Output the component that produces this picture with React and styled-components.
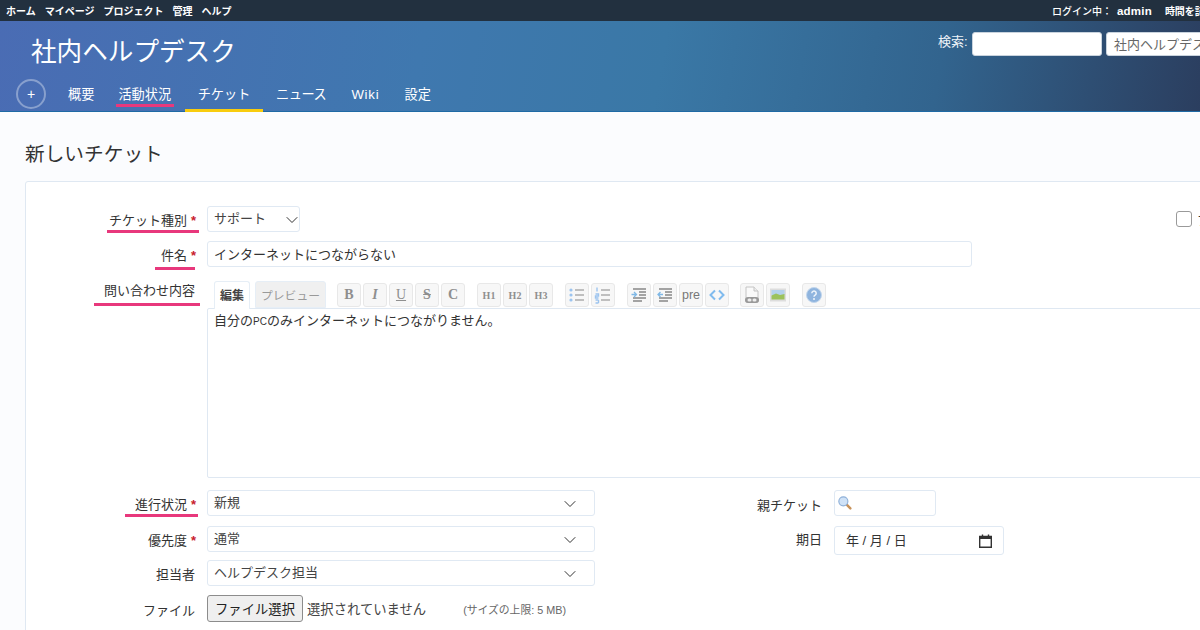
import React from 'react';
import styled, { createGlobalStyle } from 'styled-components';
import { ChevronDown } from 'lucide-react';

const GlobalStyle = createGlobalStyle`
  html, body {
    margin: 0;
    padding: 0;
    height: 100%;
    overflow: hidden;
    background: #fbfcfe;
  }
  body, input, select, button {
    font-family: "Liberation Sans", "Noto Sans CJK JP", sans-serif;
    color: #333;
  }
  * {
    box-sizing: border-box;
  }
`;

const PINK = '#e8387c';

const Page = styled.div`
  width: 1200px;
  height: 630px;
  overflow: hidden;
`;

const TopMenu = styled.div`
  display: flex;
  align-items: center;
  justify-content: space-between;
  height: 21px;
  padding-left: 6px;
  background: #22303f;
  color: #fff;
  font-size: 10px;
  font-weight: 700;
  white-space: nowrap;
`;

const TopLinks = styled.div`
  display: flex;
  gap: 9px;
`;

const Account = styled.div`
  display: flex;
  gap: 13px;
  width: 148px;
  overflow: hidden;
  flex: none;
`;

const AccountName = styled.span`
  margin-left: 5px;
  font-size: 11.5px;
  letter-spacing: 0.2px;
`;

const LoginLabel = styled.span`
  font-weight: 500;
`;

const Header = styled.header`
  display: flex;
  flex-direction: column;
  height: 91px;
  background: linear-gradient(100deg, #4a6cb4 0%, #3f78af 35%, #3a78a6 55%, #32648e 78%, #2b3e5f 100%);
  border-bottom: 1px solid #1f6aa5;
  color: #fff;
`;

const TitleRow = styled.div`
  display: flex;
  justify-content: space-between;
  height: 57px;
`;

const SiteTitle = styled.h1`
  margin: 14px 0 0 31px;
  font-size: 25.6px;
  line-height: 34px;
  font-weight: 400;
  white-space: nowrap;
`;

const QuickSearch = styled.div`
  display: flex;
  align-items: flex-start;
  flex: none;
  width: 262px;
  padding-top: 11px;
  overflow: hidden;
  font-size: 13px;
  color: #eef3f8;
`;

const SearchLabel = styled.span`
  flex: none;
  width: 34px;
  line-height: 20px;
  white-space: nowrap;
`;

const HeaderInput = styled.input`
  flex: none;
  width: 130px;
  height: 24px;
  border: 1px solid #c9d3dd;
  border-radius: 3px;
  background: #fff;
`;

const ProjectJump = styled.div`
  flex: none;
  width: 130px;
  height: 24px;
  margin-left: 4px;
  padding: 0 7px;
  border: 1px solid #c9d3dd;
  border-radius: 3px;
  background: #fff;
  color: #666;
  line-height: 24px;
  white-space: nowrap;
`;

const Tabs = styled.nav`
  display: flex;
  align-items: flex-start;
  height: 33px;
  padding-left: 16px;
`;

const PlusButton = styled.div`
  flex: none;
  display: flex;
  align-items: center;
  justify-content: center;
  width: 30px;
  height: 30px;
  margin: 1px 12px 0 0;
  border: 2px solid rgba(255, 255, 255, 0.35);
  border-radius: 50%;
  font-size: 14px;
`;

const Tab = styled.a`
  position: relative;
  display: block;
  height: ${(p) => (p.$active ? 34 : 33)}px;
  margin-left: ${(p) => p.$gap || 0}px;
  padding: 0 ${(p) => p.$pad ?? 0}px;
  font-size: 13.2px;
  line-height: 33px;
  letter-spacing: ${(p) => p.$spacing ?? 0}px;
  color: #fff;
  white-space: nowrap;
  ${(p) => p.$active && 'border-bottom: 3px solid #f8cc0e;'}
  ${(p) =>
    p.$marked &&
    `
    &::after {
      content: '';
      position: absolute;
      left: -2px;
      right: -3px;
      top: 26px;
      height: 3px;
      background: ${PINK};
    }
  `}
`;

const Main = styled.main`
  padding: 30px 0 0 25px;
`;

const PageTitle = styled.h2`
  margin: 0 0 15px;
  font-size: 19.7px;
  line-height: 24px;
  font-weight: 400;
  color: #333;
`;

const FormBox = styled.div`
  width: 1300px;
  height: 470px;
  padding-top: 24px;
  background: #fff;
  border: 1px solid #dfe8f2;
  border-radius: 3px;
`;

const Row = styled.div`
  display: flex;
  align-items: flex-start;
  margin-bottom: ${(p) => p.$after ?? 9}px;
`;

const FieldLabel = styled.label`
  flex: none;
  width: 171px;
  min-height: 26px;
  padding: ${(p) => p.$top ?? 6}px 2px 0 0;
  text-align: right;
  font-size: 13px;
  line-height: 18px;
  color: #333;
  white-space: nowrap;
`;

const LabelText = styled.span`
  position: relative;
  ${(p) =>
    p.$mark &&
    `
    &::after {
      content: '';
      position: absolute;
      height: 3px;
      left: ${p.$mark[0]}px;
      right: ${p.$mark[1]}px;
      bottom: ${p.$mark[2] ?? -5}px;
      background: ${PINK};
    }
  `}
`;

const Required = styled.span`
  display: inline-block;
  width: 9px;
  margin-right: -1px;
  text-align: right;
  color: #c8202c;
  font-weight: 700;
`;

const Control = styled.div`
  position: relative;
  flex: none;
  width: ${(p) => p.$width}px;
  height: ${(p) => p.$height || 26}px;
  margin-left: ${(p) => p.$left ?? 10}px;
`;

const SelectField = styled.select`
  appearance: none;
  display: block;
  width: 100%;
  height: 100%;
  padding: 0 6px 2px;
  border: 1px solid #e0e9f3;
  border-radius: 3px;
  background: #fff;
  font-size: 13px;
  color: #444;
`;

const Chevron = styled(ChevronDown)`
  position: absolute;
  right: ${(p) => p.$right}px;
  top: 4px;
  color: #333;
  pointer-events: none;
`;

const TextInput = styled.input`
  display: block;
  width: 100%;
  height: 100%;
  padding: 0 6px 2px;
  border: 1px solid #e0e9f3;
  border-radius: 3px;
  background: #fff;
  font-size: 13px;
  color: #333;
`;

const PrivateBox = styled.div`
  display: flex;
  align-items: center;
  gap: 5px;
  margin-left: auto;
  margin-right: 49px;
  height: 26px;
  font-size: 13px;
  white-space: nowrap;
`;

const CheckSquare = styled.input`
  width: 16px;
  height: 16px;
  margin: 0;
  appearance: none;
  border: 1.5px solid #9a9a9a;
  border-radius: 3px;
  background: #fff;
`;

const EditorColumn = styled.div`
  flex: none;
  width: 1090px;
  margin-left: 10px;
`;

const EditorBar = styled.div`
  display: flex;
  align-items: flex-end;
  height: 27px;
  padding-left: 7px;
`;

const EditTab = styled.div`
  flex: none;
  height: ${(p) => (p.$selected ? 28 : 27)}px;
  width: ${(p) => (p.$selected ? 36 : 71)}px;
  margin-left: ${(p) => (p.$selected ? 0 : 5)}px;
  margin-bottom: ${(p) => (p.$selected ? -1 : 0)}px;
  border: 1px solid #e6eef6;
  border-bottom: ${(p) => (p.$selected ? '0' : '1px solid #e6eef6')};
  border-radius: 3px 3px 0 0;
  background: ${(p) => (p.$selected ? '#fff' : '#f0f0f0')};
  color: ${(p) => (p.$selected ? '#444' : '#999')};
  font-size: ${(p) => (p.$selected ? 12 : 11.8)}px;
  font-weight: ${(p) => (p.$selected ? 700 : 400)};
  line-height: 28px;
  text-align: center;
  position: relative;
  z-index: 1;
`;

const ToolGroup = styled.div`
  display: flex;
  gap: 2px;
  margin-left: ${(p) => p.$left ?? 12}px;
  margin-bottom: 1px;
`;

const ToolButton = styled.div`
  display: flex;
  align-items: center;
  justify-content: center;
  width: 24px;
  height: 24px;
  border: 1px solid #e8e8e8;
  border-radius: 3px;
  background: #f7f7f7;
  color: #8f8f8f;
  font-family: "Liberation Serif", serif;
  font-size: ${(p) => p.$size || 14}px;
  font-weight: ${(p) => (p.$thin ? 400 : 700)};
  font-style: ${(p) => (p.$italic ? 'italic' : 'normal')};
  text-decoration: ${(p) => p.$deco || 'none'};
`;

const PreButton = styled(ToolButton)`
  font-family: "Liberation Sans", sans-serif;
  font-size: 12.5px;
  font-weight: 400;
  color: #777;
`;

const EditorArea = styled.div`
  width: 100%;
  height: 170px;
  padding: 4px 6px;
  border: 1px solid #dfe8f2;
  border-radius: 2px;
  background: #fff;
  font-size: 13px;
  line-height: 16px;
  color: #333;
`;

const SmallCaps = styled.span`
  font-size: 10px;
`;

const SplitRow = styled.div`
  display: flex;
  margin-top: 12px;
`;

const Column = styled.div`
  flex: none;
  width: ${(p) => p.$width}px;
`;

const SideRow = styled.div`
  display: flex;
  align-items: flex-start;
  margin-bottom: ${(p) => p.$after ?? 10}px;
`;

const SideName = styled.label`
  flex: none;
  width: 226px;
  padding-top: ${(p) => p.$top ?? 6}px;
  text-align: right;
  font-size: 13px;
  line-height: 18px;
  color: #333;
`;

const LookupInput = styled(Control)`
  display: flex;
  align-items: flex-start;
  padding: 5px 0 0 3px;
  border: 1px solid #e0e9f3;
  border-radius: 3px;
  background: #fff;
`;

const DateField = styled(Control)`
  display: flex;
  align-items: center;
  justify-content: space-between;
  padding: 0 11px;
  border: 1px solid #e0e9f3;
  border-radius: 3px;
  background: #fff;
  font-size: 13px;
  color: #333;
`;

const DateText = styled.span`
  margin-bottom: 3px;
`;

const FileRow = styled.div`
  display: flex;
  align-items: center;
  margin-left: 10px;
  font-size: 13.33px;
  color: #444;
`;

const FileButton = styled.button`
  height: 27px;
  width: 96px;
  padding: 0;
  margin-right: 4px;
  border: 1px solid #8c8c8c;
  border-radius: 3px;
  background: #efefef;
  font-size: 13.33px;
  color: #222;
`;

const FileHint = styled.span`
  margin-left: 37px;
  font-size: 10.8px;
  color: #666;
`;

const ToolIcon = styled.svg`
  display: block;
  width: 18px;
  height: 18px;
`;

const BulletIcon = () => (
  <ToolIcon viewBox="0 0 18 18">
    <g fill="#9cc4ef">
      <circle cx="3" cy="4" r="1.6" />
      <circle cx="3" cy="9" r="1.6" />
      <circle cx="3" cy="14" r="1.6" />
    </g>
    <path d="M7 4h9M7 9h9M7 14h9" stroke="#888" strokeWidth="1.2" />
  </ToolIcon>
);

const NumberIcon = () => (
  <ToolIcon viewBox="0 0 18 18">
    <path d="M3 1.5v4M1.5 8h3v2h-3v2h3M1.5 14h3M1.5 17h3M4.5 14v3" fill="none" stroke="#9cc4ef" strokeWidth="1.4" />
    <path d="M7 4h9M7 9h9M7 14h9" stroke="#888" strokeWidth="1.2" />
  </ToolIcon>
);

const IndentIcon = ({ flip }) => (
  <ToolIcon viewBox="0 0 18 18">
    <path d="M3 3h13M9 6h7M9 9h7M3 12h13M3 15h9" stroke="#888" strokeWidth="1.3" />
    <path
      d={flip ? 'M7 8.5H2M4.5 6 2 8.5 4.5 11' : 'M1.5 8.5h5M4 6l2.5 2.5L4 11'}
      stroke="#7fb8e6"
      strokeWidth="1.3"
      fill="none"
    />
  </ToolIcon>
);

const CodeIcon = () => (
  <ToolIcon viewBox="0 0 18 18">
    <path d="M7 4.5 2.5 9 7 13.5M11 4.5 15.5 9 11 13.5" stroke="#80bbee" strokeWidth="2" fill="none" />
  </ToolIcon>
);

const LinkDocIcon = () => (
  <ToolIcon viewBox="0 0 18 18">
    <path d="M3 1h8l4 4v11H3z" fill="#fafafa" stroke="#c4c4c4" />
    <path d="M11 1v4h4" fill="#eee" stroke="#c4c4c4" />
    <rect x="2" y="11" width="14" height="6" rx="3" fill="#999" />
    <rect x="4.5" y="12.5" width="4" height="3" rx="1.5" fill="#eee" />
    <rect x="9.5" y="12.5" width="4" height="3" rx="1.5" fill="#eee" />
  </ToolIcon>
);

const ImageIcon = () => (
  <ToolIcon viewBox="0 0 18 18">
    <rect x="1" y="2.5" width="16" height="13" fill="#ddd" />
    <rect x="2.5" y="4" width="13" height="5" fill="#b4d2ec" />
    <path d="M2.5 9.5 7 7.5l4 1.5 4.5-1v5.5h-13z" fill="#9cc25c" />
  </ToolIcon>
);

const HelpIcon = () => (
  <ToolIcon viewBox="0 0 18 18">
    <circle cx="9" cy="9" r="7.5" fill="#8fb4de" stroke="#c2d6ec" />
    <path d="M6.8 7.2a2.2 2.2 0 1 1 3.3 2c-.8.5-1.1.8-1.1 1.6" stroke="#eef4fa" strokeWidth="1.5" fill="none" />
    <circle cx="9" cy="13" r="1" fill="#eef4fa" />
  </ToolIcon>
);

const MagnifierIcon = () => (
  <svg width="14" height="14" viewBox="0 0 17 17">
    <path d="M10 10l5 5" stroke="#c8925a" strokeWidth="3" strokeLinecap="round" />
    <circle cx="6.5" cy="6.5" r="5.5" fill="#cfe2f7" stroke="#8fb0d8" strokeWidth="1.4" />
  </svg>
);

const CalendarIcon = () => (
  <svg width="13" height="14" viewBox="0 0 13 14">
    <path d="M.7 2.5h11.6v10.8H.7z" fill="none" stroke="#333" strokeWidth="1.4" />
    <path d="M.7 2h11.6v3H.7z" fill="#333" />
    <path d="M3.5 0.5v2M9.5 0.5v2" stroke="#333" strokeWidth="1.4" />
  </svg>
);

const Select = ({ width, value, chevron = 15 }) => (
  <Control $width={width}>
    <SelectField defaultValue={value}>
      <option>{value}</option>
    </SelectField>
    <Chevron size={20} strokeWidth={1.2} $right={chevron} />
  </Control>
);

export default function App() {
  return (
    <Page>
      <GlobalStyle />
      <TopMenu>
        <TopLinks>
          <span>ホーム</span>
          <span>マイページ</span>
          <span>プロジェクト</span>
          <span>管理</span>
          <span>ヘルプ</span>
        </TopLinks>
        <Account>
          <span>
            <LoginLabel>ログイン中：</LoginLabel>
            <AccountName>admin</AccountName>
          </span>
          <span>時間を記録</span>
        </Account>
      </TopMenu>
      <Header>
        <TitleRow>
          <SiteTitle>社内ヘルプデスク</SiteTitle>
          <QuickSearch>
            <SearchLabel>検索:</SearchLabel>
            <HeaderInput />
            <ProjectJump>社内ヘルプデスク</ProjectJump>
          </QuickSearch>
        </TitleRow>
        <Tabs>
          <PlusButton>+</PlusButton>
          <Tab $gap={10}>概要</Tab>
          <Tab $gap={24} $marked>活動状況</Tab>
          <Tab $gap={14} $pad={12.5} $active>チケット</Tab>
          <Tab $gap={13} $spacing={-0.4}>ニュース</Tab>
          <Tab $gap={25} $spacing={0.8}>Wiki</Tab>
          <Tab $gap={25}>設定</Tab>
        </Tabs>
      </Header>
      <Main>
        <PageTitle>新しいチケット</PageTitle>
        <FormBox>
          <Row>
            <FieldLabel>
              <LabelText $mark={[-2, -12]}>チケット種別</LabelText>
              <Required>*</Required>
            </FieldLabel>
            <Select width={93} value="サポート" chevron={-2} />
            <PrivateBox>
              <CheckSquare type="checkbox" />
              <span>プライベート</span>
            </PrivateBox>
          </Row>
          <Row $after={14}>
            <FieldLabel>
              <LabelText $mark={[-6, -8, -7]}>件名</LabelText>
              <Required>*</Required>
            </FieldLabel>
            <Control $width={765}>
              <TextInput defaultValue="インターネットにつながらない" />
            </Control>
          </Row>
          <Row $after={0}>
            <FieldLabel $top={1}>
              <LabelText $mark={[-10, -5, -8]}>問い合わせ内容</LabelText>
            </FieldLabel>
            <EditorColumn>
              <EditorBar>
                <EditTab $selected>編集</EditTab>
                <EditTab>プレビュー</EditTab>
                <ToolGroup $left={11}>
                  <ToolButton>B</ToolButton>
                  <ToolButton $italic>I</ToolButton>
                  <ToolButton $deco="underline" $thin>U</ToolButton>
                  <ToolButton $deco="line-through">S</ToolButton>
                  <ToolButton>C</ToolButton>
                </ToolGroup>
                <ToolGroup>
                  <ToolButton $size={10}>H1</ToolButton>
                  <ToolButton $size={10}>H2</ToolButton>
                  <ToolButton $size={10}>H3</ToolButton>
                </ToolGroup>
                <ToolGroup>
                  <ToolButton><BulletIcon /></ToolButton>
                  <ToolButton><NumberIcon /></ToolButton>
                </ToolGroup>
                <ToolGroup>
                  <ToolButton><IndentIcon /></ToolButton>
                  <ToolButton><IndentIcon flip /></ToolButton>
                  <PreButton>pre</PreButton>
                  <ToolButton><CodeIcon /></ToolButton>
                </ToolGroup>
                <ToolGroup $left={11}>
                  <ToolButton><LinkDocIcon /></ToolButton>
                  <ToolButton><ImageIcon /></ToolButton>
                </ToolGroup>
                <ToolGroup>
                  <ToolButton><HelpIcon /></ToolButton>
                </ToolGroup>
              </EditorBar>
              <EditorArea>
                自分の<SmallCaps>PC</SmallCaps>のみインターネットにつながりません。
              </EditorArea>
            </EditorColumn>
          </Row>
          <SplitRow>
            <Column $width={570}>
              <Row $after={10}>
                <FieldLabel>
                  <LabelText $mark={[-10, -11]}>進行状況</LabelText>
                  <Required>*</Required>
                </FieldLabel>
                <Select width={388} value="新規" />
              </Row>
              <Row $after={8}>
                <FieldLabel>
                  優先度
                  <Required>*</Required>
                </FieldLabel>
                <Select width={388} value="通常" />
              </Row>
              <Row>
                <FieldLabel>担当者</FieldLabel>
                <Select width={388} value="ヘルプデスク担当" />
              </Row>
            </Column>
            <Column $width={500}>
              <SideRow>
                <SideName $top={7}>親チケット</SideName>
                <LookupInput $width={102} $left={12}>
                  <MagnifierIcon />
                </LookupInput>
              </SideRow>
              <SideRow>
                <SideName $top={5}>期日</SideName>
                <DateField $width={170} $height={29} $left={12}>
                  <DateText>年 / 月 / 日</DateText>
                  <CalendarIcon />
                </DateField>
              </SideRow>
            </Column>
          </SplitRow>
          <Row>
            <FieldLabel $top={7}>ファイル</FieldLabel>
            <FileRow>
              <FileButton>ファイル選択</FileButton>
              選択されていません
              <FileHint>(サイズの上限: 5 MB)</FileHint>
            </FileRow>
          </Row>
        </FormBox>
      </Main>
    </Page>
  );
}
